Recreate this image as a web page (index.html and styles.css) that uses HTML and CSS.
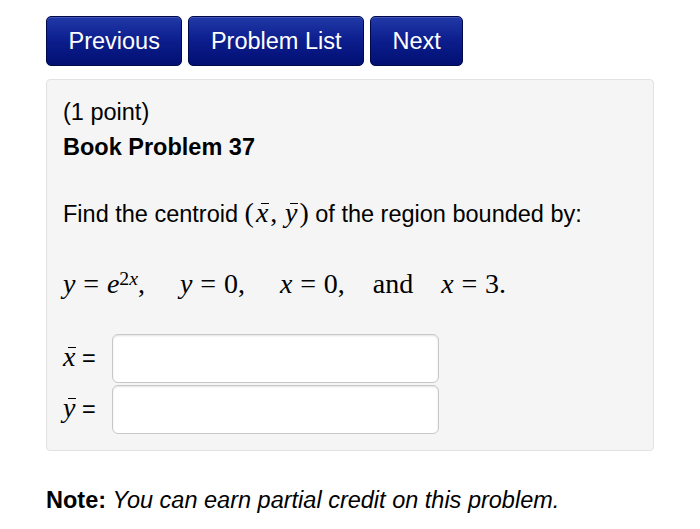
FILE: index.html
```html
<!DOCTYPE html>
<html lang="en">
<head>
    <meta charset="UTF-8">
    <meta name="viewport" content="width=device-width, initial-scale=1.0">
    <title>Book Problem 37</title>
    <link rel="stylesheet" href="styles.css">
</head>
<body>
    <div class="page">
        <nav class="nav">
            <button class="nav-btn">Previous</button>
            <button class="nav-btn">Problem List</button>
            <button class="nav-btn">Next</button>
        </nav>

        <section class="problem">
            <div class="point">(1 point)</div>
            <div class="title">Book Problem 37</div>

            <p class="intro">Find the centroid <span class="m">(<i class="bar">x</i>,&thinsp;<i class="bar">y</i>)</span> of the region bounded by:</p>

            <p class="display">
                <i>y</i><span class="op">=</span><i>e</i><sup>2<i>x</i></sup>,<span class="quad"></span>
                <i>y</i><span class="op">=</span>0,<span class="quad"></span>
                <i>x</i><span class="op">=</span>0,<span class="quad"></span>and<span class="quad"></span><i>x</i><span class="op">=</span>3.
            </p>

            <div class="answers">
                <div class="answer-row">
                    <label class="answer-label"><span class="m"><i class="bar">x</i></span> =</label>
                    <input class="answer-input" type="text">
                </div>
                <div class="answer-row">
                    <label class="answer-label"><span class="m"><i class="bar">y</i></span> =</label>
                    <input class="answer-input" type="text">
                </div>
            </div>
        </section>

        <p class="note"><b>Note:</b> <i>You can earn partial credit on this problem.</i></p>
    </div>
</body>
</html>
```

FILE: styles.css
```css
body {
    margin: 0;
    padding: 0;
    background-color: #fff;
    color: #000;
    font-family: 'Liberation Sans', Arial, sans-serif;
    font-size: 23.5px;
    line-height: 35px;
}

.page {
    width: 608px;
    padding: 16px 0 0 46px;
}

/* barra de navegação */
.nav {
    display: flex;
    gap: 6px;
    margin-bottom: 13px;
}

.nav-btn {
    height: 50px;
    padding: 0 21.5px;
    font-family: inherit;
    font-size: 23.5px;
    color: #fff;
    background: linear-gradient(#2139a8, #0c1d8c 50%, #021073);
    border: 1px solid #000a4a;
    border-radius: 5px;
    box-shadow: inset 0 1px 0 rgba(255,255,255,0.15);
}

/* caixa do problema */
.problem {
    background-color: #f5f5f5;
    border: 1px solid #e2e2e2;
    border-radius: 4px;
    padding: 15px 16px 16px;
}

.title {
    font-weight: bold;
}

.intro {
    margin: 32px 0 0;
}

.m {
    font-family: 'Liberation Serif', 'Times New Roman', serif;
    font-size: 28px;
    line-height: 1;
}

.bar {
    position: relative;
    display: inline-block;
    line-height: 1;
}

.intro .bar {
    margin: 0 2px;
}

.bar::before {
    content: "";
    position: absolute;
    left: 0.17em;
    width: 0.3em;
    top: 0.13em;
    border-top: 1.5px solid #000;
}

.display {
    margin: 35px 0 0;
    font-family: 'Liberation Serif', 'Times New Roman', serif;
    font-size: 28px;
    line-height: 34px;
    white-space: nowrap;
}

.display sup {
    font-size: 0.707em;
    line-height: 0;
    vertical-align: 0.42em;
}

.op {
    margin: 0 0.28em;
}

.quad {
    display: inline-block;
    width: 1em;
}

.answers {
    margin-top: 33px;
    display: flex;
    flex-direction: column;
    gap: 2px;
}

.answer-row {
    display: flex;
    align-items: center;
}

.answer-label {
    margin-right: 16px;
    white-space: nowrap;
}

.answer-input {
    width: 327px;
    height: 49px;
    box-sizing: border-box;
    background: #fff;
    border: 1px solid #c8c8c8;
    border-radius: 6px;
    box-shadow: inset 0 1px 2px rgba(0,0,0,0.12);
}

.note {
    margin: 32px 0 0;
}
```
